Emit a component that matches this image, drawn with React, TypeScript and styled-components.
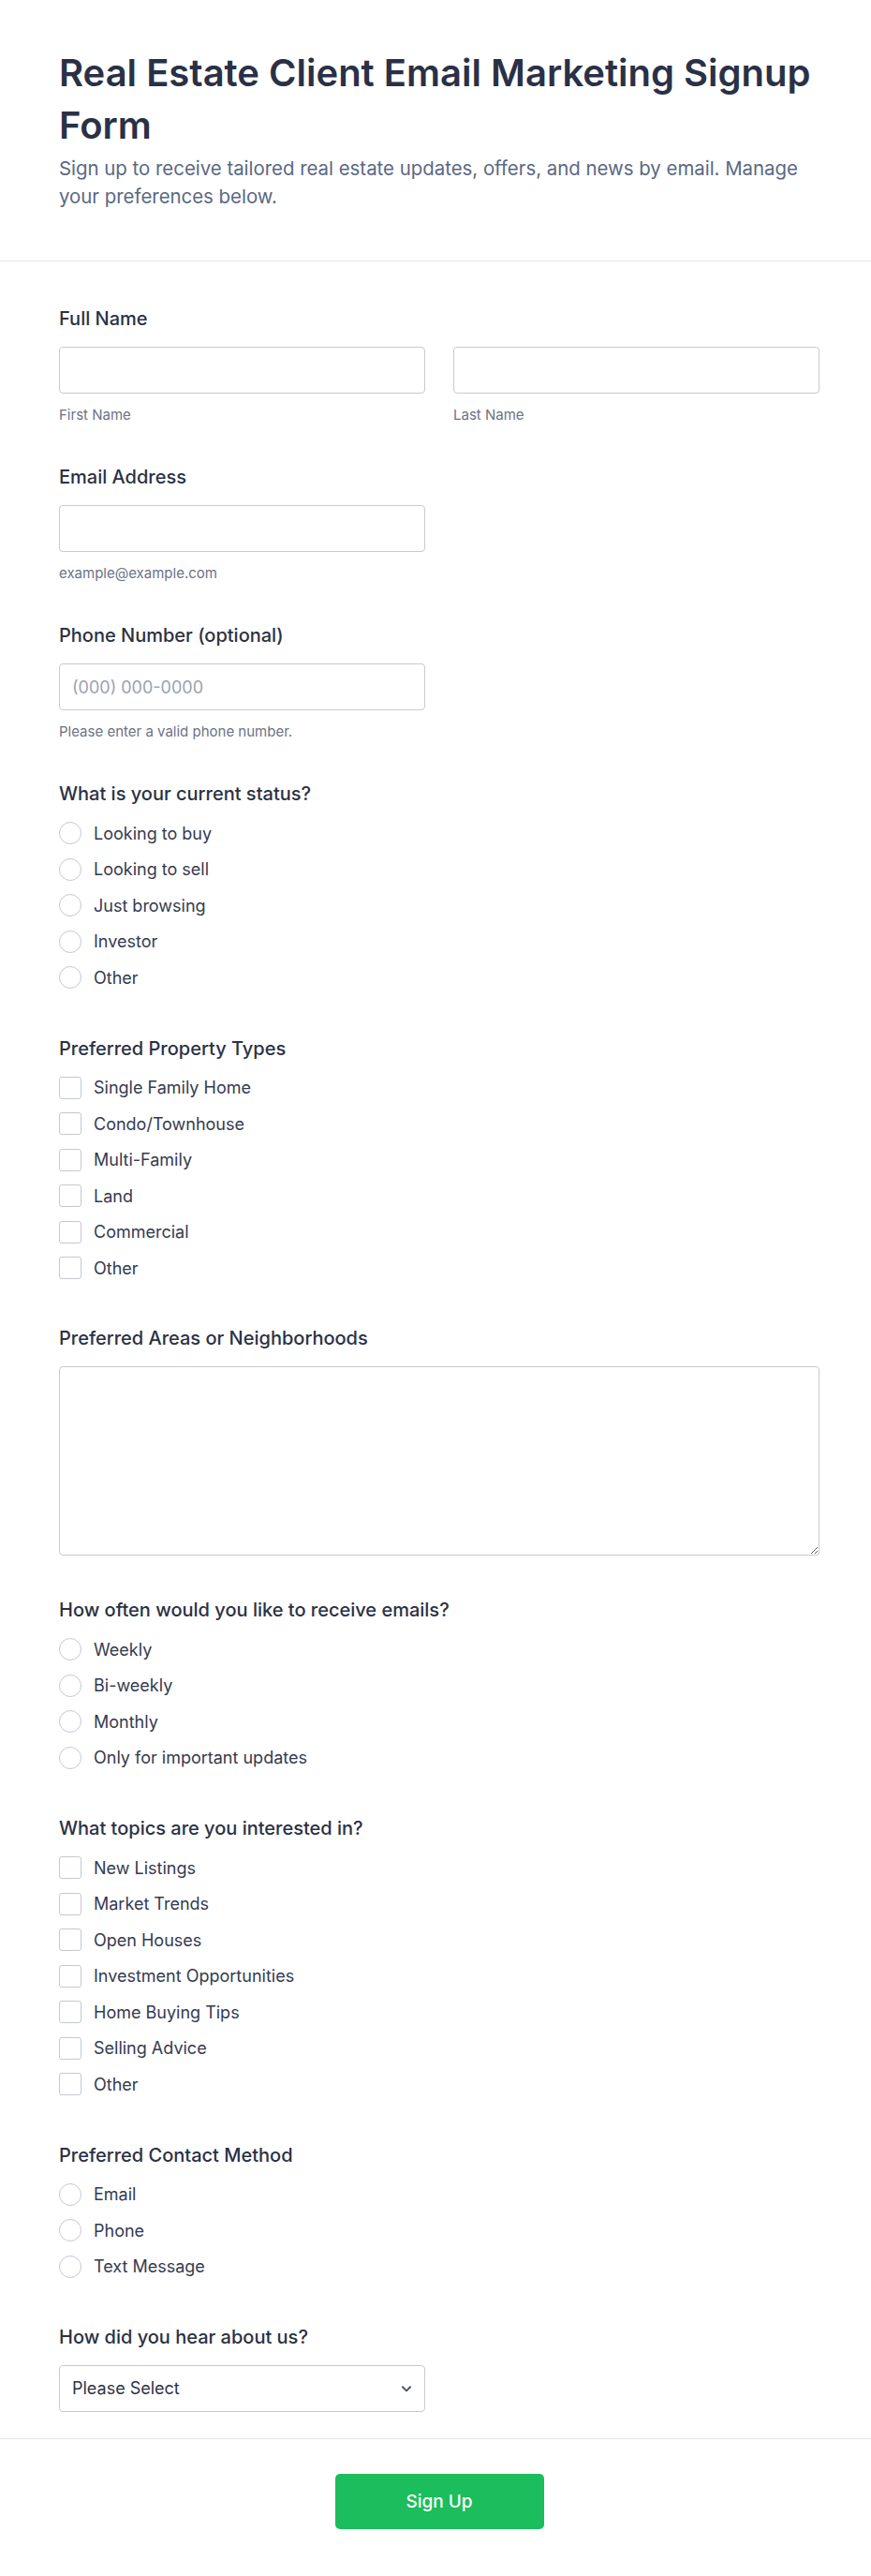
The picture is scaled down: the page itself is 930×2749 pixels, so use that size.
import React from 'react';
import styled, { createGlobalStyle } from 'styled-components';

const GlobalStyle = createGlobalStyle`
  body {
    margin: 0;
    background: #ffffff;
    font-family: Inter, "Noto Sans", sans-serif;
    color: #2c3345;
  }
  * { box-sizing: border-box; }
`;

const Page = styled.div`
  width: 100%;
  background: #ffffff;
`;

const Header = styled.header`
  padding: 50px 55px 53px 63px;
  border-bottom: 1px solid #e2e6ed;
`;

const Title = styled.h1`
  margin: 0;
  font-size: 40px;
  line-height: 56px;
  font-weight: 600;
  color: #2a3146;
`;

const Subtitle = styled.p`
  margin: 3px 0 0;
  font-size: 20.4px;
  line-height: 30px;
  color: #5a6883;
`;

const FormBody = styled.form`
  padding: 49px 55px 28px 63px;
`;

const Field = styled.div<{ $space: number }>`
  margin-bottom: ${({ $space }) => $space}px;
`;

const Label = styled.div`
  font-size: 20px;
  line-height: 24px;
  font-weight: 500;
  color: #2a3144;
  margin-bottom: 18px;
`;

const Columns = styled.div`
  display: grid;
  grid-template-columns: 1fr 1fr;
  column-gap: 30px;
`;

const Cell = styled.div`
  display: flex;
  flex-direction: column;
`;

const TextInput = styled.input`
  width: 100%;
  height: 50px;
  border: 1px solid #c6cad4;
  border-radius: 4px;
  padding: 0 13px;
  font-family: inherit;
  font-size: 18px;
  color: #2c3345;
  background: #fff;
  &::placeholder { color: #9aa2b1; }
`;

const Hint = styled.div`
  margin-top: 13px;
  font-size: 15px;
  line-height: 20px;
  color: #6a7386;
`;

const OptionList = styled.div`
  display: flex;
  flex-direction: column;
  gap: 14.5px;
`;

const Option = styled.label`
  display: flex;
  align-items: center;
  gap: 13px;
  height: 24px;
  font-size: 18px;
  color: #343b4f;
  cursor: pointer;
`;

const Mark = styled.span<{ $round?: boolean }>`
  flex: none;
  width: 24px;
  height: 24px;
  border: 1px solid #c4c8d2;
  border-radius: ${({ $round }) => ($round ? '50%' : '3px')};
  background: #fff;
`;

const TextArea = styled.textarea`
  display: block;
  width: 100%;
  height: 202px;
  border: 1px solid #c6cad4;
  border-radius: 4px;
  padding: 12px 13px;
  font-family: inherit;
  font-size: 18px;
  resize: vertical;
`;

const SelectWrap = styled.div`
  position: relative;
  width: calc(50% - 15px);
`;

const Select = styled.select`
  appearance: none;
  width: 100%;
  height: 50px;
  border: 1px solid #c6cad4;
  border-radius: 4px;
  padding: 0 40px 0 13px;
  font-family: inherit;
  font-size: 18px;
  color: #2c3345;
  background: #fff;
`;

const Chevron = styled.svg`
  position: absolute;
  right: 13px;
  top: 50%;
  width: 14px;
  height: 14px;
  transform: translateY(-50%);
  pointer-events: none;
`;

const Footer = styled.div`
  border-top: 1px solid #e2e6ed;
  padding: 37px 55px 50px 63px;
  display: flex;
  justify-content: center;
`;

const SubmitButton = styled.button`
  width: 223px;
  height: 59px;
  border: none;
  border-radius: 5px;
  background: #1bbd5c;
  color: #ffffff;
  font-family: inherit;
  font-size: 19px;
  font-weight: 500;
  cursor: pointer;
`;

const status = ['Looking to buy', 'Looking to sell', 'Just browsing', 'Investor', 'Other'];
const propertyTypes = ['Single Family Home', 'Condo/Townhouse', 'Multi-Family', 'Land', 'Commercial', 'Other'];
const frequency = ['Weekly', 'Bi-weekly', 'Monthly', 'Only for important updates'];
const topics = [
  'New Listings',
  'Market Trends',
  'Open Houses',
  'Investment Opportunities',
  'Home Buying Tips',
  'Selling Advice',
  'Other',
];
const contact = ['Email', 'Phone', 'Text Message'];

function Choices({ items, round }: { items: string[]; round?: boolean }) {
  return (
    <OptionList>
      {items.map((item) => (
        <Option key={item}>
          <Mark $round={round} />
          {item}
        </Option>
      ))}
    </OptionList>
  );
}

export default function App() {
  return (
    <Page>
      <GlobalStyle />
      <Header>
        <Title>Real Estate Client Email Marketing Signup Form</Title>
        <Subtitle>
          Sign up to receive tailored real estate updates, offers, and news by email. Manage your preferences below.
        </Subtitle>
      </Header>

      <FormBody onSubmit={(e) => e.preventDefault()}>
        <Field $space={44}>
          <Label>Full Name</Label>
          <Columns>
            <Cell>
              <TextInput type="text" />
              <Hint>First Name</Hint>
            </Cell>
            <Cell>
              <TextInput type="text" />
              <Hint>Last Name</Hint>
            </Cell>
          </Columns>
        </Field>

        <Field $space={44}>
          <Label>Email Address</Label>
          <Columns>
            <Cell>
              <TextInput type="email" />
              <Hint>example@example.com</Hint>
            </Cell>
          </Columns>
        </Field>

        <Field $space={44}>
          <Label>Phone Number (optional)</Label>
          <Columns>
            <Cell>
              <TextInput type="tel" placeholder="(000) 000-0000" />
              <Hint>Please enter a valid phone number.</Hint>
            </Cell>
          </Columns>
        </Field>

        <Field $space={51.5}>
          <Label>What is your current status?</Label>
          <Choices items={status} round />
        </Field>

        <Field $space={51}>
          <Label>Preferred Property Types</Label>
          <Choices items={propertyTypes} />
        </Field>

        <Field $space={46}>
          <Label>Preferred Areas or Neighborhoods</Label>
          <TextArea />
        </Field>

        <Field $space={51.5}>
          <Label>How often would you like to receive emails?</Label>
          <Choices items={frequency} round />
        </Field>

        <Field $space={51.5}>
          <Label>What topics are you interested in?</Label>
          <Choices items={topics} />
        </Field>

        <Field $space={51}>
          <Label>Preferred Contact Method</Label>
          <Choices items={contact} round />
        </Field>

        <Field $space={0}>
          <Label>How did you hear about us?</Label>
          <SelectWrap>
            <Select defaultValue="">
              <option value="">Please Select</option>
              <option>Online Search</option>
              <option>Social Media</option>
              <option>Referral</option>
              <option>Other</option>
            </Select>
            <Chevron viewBox="0 0 24 24" fill="none" stroke="#4a5068" strokeWidth="3.2" strokeLinecap="round" strokeLinejoin="round">
              <path d="M5 9l7 7 7-7" />
            </Chevron>
          </SelectWrap>
        </Field>
      </FormBody>

      <Footer>
        <SubmitButton type="submit">Sign Up</SubmitButton>
      </Footer>
    </Page>
  );
}
